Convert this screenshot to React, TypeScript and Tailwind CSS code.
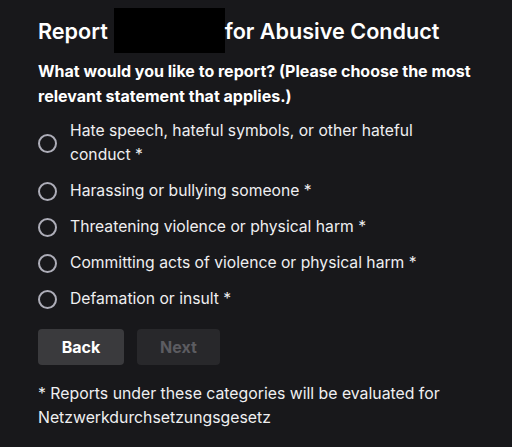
import React from "react";

const options = [
  "Hate speech, hateful symbols, or other hateful conduct *",
  "Harassing or bullying someone *",
  "Threatening violence or physical harm *",
  "Committing acts of violence or physical harm *",
  "Defamation or insult *",
];

export default function App() {
  return (
    <div className="w-[512px] h-[447px] bg-[#18181b] text-[#efeff1] overflow-hidden font-['Inter','Liberation_Sans',sans-serif]">
      <div className="pl-[38px] pr-[30px] pt-[8px]">
        <h1 className="flex items-center text-[21.6px] font-semibold leading-[30px] text-white">
          <span>Report</span>
          <span className="inline-block w-[111px] h-[45px] bg-black ml-[6px]" />
          <span>for Abusive Conduct</span>
        </h1>
        <p className="mt-[6px] text-[16px] font-bold leading-[25px] text-white">
          What would you like to report? (Please choose the most relevant statement that applies.)
        </p>

        <div className="mt-[10px] flex flex-col gap-[12px]">
          {options.map((label) => (
            <label key={label} className="flex items-center gap-[13px] cursor-pointer">
              <span className="shrink-0 w-[19px] h-[19px] rounded-full border-[2px] border-[#adadb8]" />
              <span className="text-[15.7px] leading-[24px] text-[#efeff1] pr-[40px]">{label}</span>
            </label>
          ))}
        </div>

        <div className="mt-[18px] flex gap-[13px]">
          <button className="w-[86px] h-[36px] rounded-[4px] bg-[#3a3a3d] text-white text-[16px] font-bold">
            Back
          </button>
          <button className="w-[83px] h-[36px] rounded-[4px] bg-[#28282b] text-[#5c5c61] text-[16px] font-bold">
            Next
          </button>
        </div>

        <p className="mt-[17px] text-[15.8px] leading-[24px] text-[#efeff1]">
          * Reports under these categories will be evaluated for Netzwerkdurchsetzungsgesetz
        </p>
      </div>
    </div>
  );
}
